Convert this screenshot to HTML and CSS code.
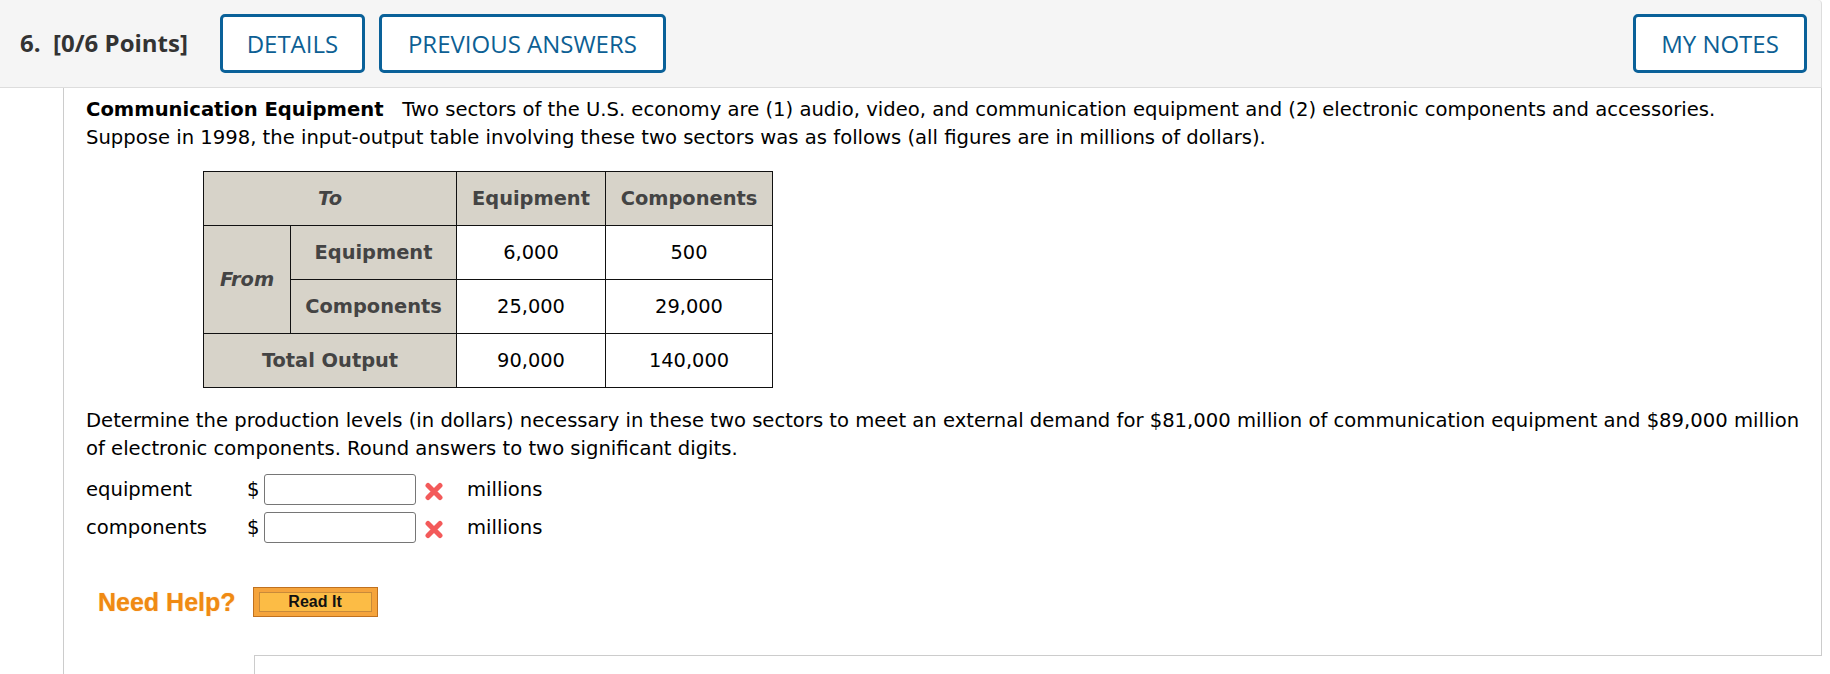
FILE: index.html
```html
<!DOCTYPE html>
<html>
<head>
<meta charset="utf-8">
<link rel="stylesheet" href="styles.css">
</head>
<body>
<div class="page">
  <div class="qhead">
    <div class="points">6.&nbsp; [0/6 Points]</div>
    <button class="hbtn details">DETAILS</button>
    <button class="hbtn prev">PREVIOUS ANSWERS</button>
    <div class="spacer"></div>
    <button class="hbtn notes">MY NOTES</button>
  </div>
  <div class="qwrap">
    <div class="qbody">
      <p class="para"><b>Communication Equipment</b>&nbsp;&nbsp; Two sectors of the U.S. economy are (1) audio, video, and communication equipment and (2) electronic components and accessories. Suppose in 1998, the input-output table involving these two sectors was as follows (all figures are in millions of dollars).</p>
      <table class="io">
        <tr>
          <th colspan="2" class="it">To</th>
          <th class="c3">Equipment</th>
          <th class="c4">Components</th>
        </tr>
        <tr>
          <th rowspan="2" class="it c1">From</th>
          <th class="c2">Equipment</th>
          <td>6,000</td>
          <td>500</td>
        </tr>
        <tr>
          <th class="c2">Components</th>
          <td>25,000</td>
          <td>29,000</td>
        </tr>
        <tr>
          <th colspan="2">Total Output</th>
          <td>90,000</td>
          <td>140,000</td>
        </tr>
      </table>
      <p class="para para2">Determine the production levels (in dollars) necessary in these two sectors to meet an external demand for $81,000 million of communication equipment and $89,000 million of electronic components. Round answers to two significant digits.</p>
      <div class="answers">
        <div class="arow">
          <span class="lbl">equipment</span>
          <span class="dollar">$</span>
          <input class="ans" type="text">
          <svg class="xmark" width="20" height="19" viewBox="0 0 20 19"><path d="M4 3.5 L16 15.5 M16 3.5 L4 15.5" stroke="#f35a5a" stroke-width="5" stroke-linecap="round"/></svg>
          <span class="unit">millions</span>
        </div>
        <div class="arow">
          <span class="lbl">components</span>
          <span class="dollar">$</span>
          <input class="ans" type="text">
          <svg class="xmark" width="20" height="19" viewBox="0 0 20 19"><path d="M4 3.5 L16 15.5 M16 3.5 L4 15.5" stroke="#f35a5a" stroke-width="5" stroke-linecap="round"/></svg>
          <span class="unit">millions</span>
        </div>
      </div>
      <div class="help">
        <span class="needhelp">Need Help?</span>
        <span class="readit"><span class="readit-in">Read It</span></span>
      </div>
    </div>
    <div class="lowbox"></div>
  </div>
</div>
</body>
</html>
```
FILE: styles.css
```css
html, body {
  margin: 0;
  padding: 0;
  background: #ffffff;
}
.page {
  width: 1822px;
}
.qhead {
  background: #f5f5f5;
  border-bottom: 1px solid #dddddd;
  border-right: 1px solid #dddddd;
  border-top-right-radius: 4px;
  display: flex;
  align-items: center;
  padding: 0 14px 0 20px;
  box-sizing: border-box;
  height: 88px;
  font-family: "Open Sans", sans-serif;
}
.points {
  font-weight: 700;
  font-size: 24px;
  color: #333333;
  margin-right: 32px;
  margin-top: -2px;
}
.spacer {
  flex: 1;
}
.hbtn {
  font-family: "Open Sans", sans-serif;
  font-size: 24px;
  color: #0d5f94;
  background: #ffffff;
  border: 3px solid #0a6199;
  border-radius: 5px;
  height: 59px;
  padding: 0;
  margin-top: -1px;
  box-sizing: border-box;
}
.details {
  width: 145px;
  margin-right: 14px;
}
.prev {
  width: 287px;
}
.notes {
  width: 174px;
}
.qwrap {
  margin-left: 63px;
  border-left: 1px solid #cccccc;
}
.qbody {
  border-right: 1px solid #cccccc;
  padding: 8px 0 0 22px;
  height: 567px;
  box-sizing: border-box;
  font-family: "DejaVu Sans", Verdana, sans-serif;
  font-size: 19.6px;
  color: #000000;
}
.para {
  margin: 0;
  line-height: 28px;
  width: 1717px;
}
.para b {
  font-weight: 700;
}
.io {
  border-collapse: collapse;
  margin: 19px 0 19px 117px;
  font-size: 19.4px;
}
.io th, .io td {
  border: 1px solid #111111;
  height: 53px;
  padding: 0;
  text-align: center;
}
.io th {
  background: #d7d3c9;
  color: #444444;
  font-weight: 700;
}
.io td {
  background: #ffffff;
  color: #000000;
}
.io .it {
  font-style: italic;
}
.io .c1 {
  width: 86px;
}
.io .c2 {
  width: 165px;
}
.io .c3 {
  width: 148px;
}
.io .c4 {
  width: 142px;
  padding: 0 12px;
}
.answers {
  margin-top: 7px;
}
.arow {
  display: flex;
  align-items: center;
  height: 38.5px;
}
.lbl {
  width: 161px;
}
.dollar {
  width: 17px;
}
.ans {
  width: 152px;
  height: 31px;
  box-sizing: border-box;
  border: 1px solid #767676;
  border-radius: 3px;
  margin: 0;
  padding: 0;
}
.xmark {
  margin-left: 8px;
  margin-top: 4px;
}
.unit {
  margin-left: 23px;
}
.help {
  display: flex;
  align-items: center;
  margin-top: 40px;
  padding-left: 12px;
}
.needhelp {
  font-family: "Liberation Sans", Arial, sans-serif;
  font-weight: 700;
  font-size: 25px;
  color: #f08a12;
  text-shadow: 0 0 1px rgba(240, 138, 18, 0.6);
  margin-right: 17px;
}
.readit {
  display: inline-block;
  width: 125px;
  height: 30px;
  box-sizing: border-box;
  background: #f5a43c;
  border: 1px solid #c0711f;
  padding: 4px 5px;
}
.readit-in {
  display: block;
  height: 100%;
  box-sizing: border-box;
  background: #fcbc45;
  border: 1px solid #c88a3a;
  font-family: "Liberation Sans", Arial, sans-serif;
  font-weight: 700;
  font-size: 16px;
  line-height: 18px;
  text-align: center;
  color: #111111;
}
.lowbox {
  margin-left: 190px;
  height: 30px;
  border-top: 1px solid #cccccc;
  border-left: 1px solid #cccccc;
}
```
